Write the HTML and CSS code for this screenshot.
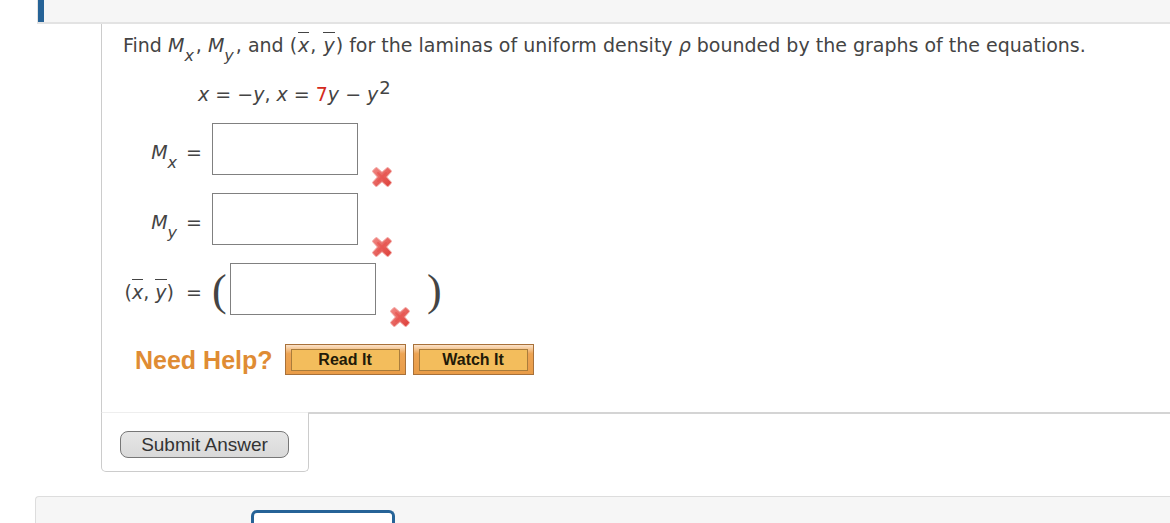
FILE: index.html
```html
<!DOCTYPE html>
<html lang="en">
    <head>
        <meta charset="UTF-8">
        <title>Question</title>
        <link rel="stylesheet" href="styles.css">
    </head>
    <body>
        <!-- Cross used next to every wrong answer -->
        <svg class="defs" width="0" height="0" aria-hidden="true">
            <defs>
                <linearGradient id="red" x1="0" y1="0" x2="1" y2="1">
                    <stop offset="0" stop-color="#f28b87"/>
                    <stop offset="1" stop-color="#dc3c36"/>
                </linearGradient>
                <symbol id="cross" viewBox="0 0 20 20">
                    <path d="M3.6 .8 L.9 3.5 Q.2 4.4 1 5.2 L5.4 10 L1 14.8 Q.2 15.6 .9 16.5 L3.6 19.2 Q4.5 19.8 5.3 19 L10 14.8 L14.7 19 Q15.5 19.8 16.4 19.2 L19.1 16.5 Q19.8 15.6 19 14.8 L14.6 10 L19 5.2 Q19.8 4.4 19.1 3.5 L16.4 .8 Q15.5 .2 14.7 1 L10 5.2 L5.3 1 Q4.5 .2 3.6 .8 Z" fill="url(#red)" stroke="#f3a5a2" stroke-width="1"/>
                    <path d="M6 6 L14 14 M14 6 L6 14" stroke="#e9504c" stroke-width="2" stroke-linecap="round" opacity=".6"/>
                </symbol>
            </defs>
        </svg>

        <header class="question-header">
            <div class="marker"></div>
        </header>

        <main class="question">
            <div class="question-body">
                <p class="prompt">Find <i>M</i><sub>x</sub>, <i>M</i><sub>y</sub>, and (<i class="bar">x</i>, <i class="bar">y</i>) for the laminas of uniform density <i>ρ</i> bounded by the graphs of the equations.</p>
                <p class="equation"><i>x</i> = −<i>y</i>, <i>x</i> = <span class="random">7</span><i>y</i> − <i>y</i><sup>2</sup></p>

                <form class="answers" id="answers" action="#">
                    <label for="mx"><i>M</i><sub>x</sub> =</label>
                    <div class="answer">
                        <input class="answer-box" type="text" id="mx" name="mx">
                        <svg class="cross" role="img" aria-label="Incorrect"><use href="#cross"/></svg>
                    </div>
                    <label for="my"><i>M</i><sub>y</sub> =</label>
                    <div class="answer">
                        <input class="answer-box" type="text" id="my" name="my">
                        <svg class="cross" role="img" aria-label="Incorrect"><use href="#cross"/></svg>
                    </div>
                    <label for="centroid">(<i class="bar">x</i>, <i class="bar">y</i>)&nbsp; =</label>
                    <div class="answer">
                        <span class="paren">(</span>
                        <input class="answer-box" type="text" id="centroid" name="centroid">
                        <svg class="cross" role="img" aria-label="Incorrect"><use href="#cross"/></svg>
                        <span class="paren close">)</span>
                    </div>
                </form>

                <div class="help">
                    <span class="help-title">Need Help?</span>
                    <button class="help-button" type="button"><span>Read It</span></button>
                    <button class="help-button" type="button"><span>Watch It</span></button>
                </div>
            </div>

            <div class="question-footer">
                <div class="submit-box">
                    <button class="submit" type="submit" form="answers">Submit Answer</button>
                </div>
                <div class="footer-line"></div>
            </div>
        </main>

        <section class="next-question">
            <div class="next-button"></div>
        </section>
    </body>
</html>
```

FILE: styles.css
```css
* {
    box-sizing: border-box;
}

body {
    margin: 0;
    background-color: white;
    color: #444;
    font-family: Verdana, "DejaVu Sans", sans-serif;
    font-size: 19px;
}

.defs {
    display: block;
}

.question-header {
    margin-left: 37px;
    background-color: #f6f6f6;
    border-left: 1px solid #e3e3e3;
    border-bottom: 2px solid #e3e3e3;
}

.marker {
    width: 6px;
    height: 22px;
    background-color: #266397;
}

.question {
    margin-left: 101px;
}

.question-body {
    padding: 7px 0 37px 21px;
    border-left: 1px solid #ccc;
}

p {
    margin: 0;
}

sub,
sup {
    font-size: 16px;
    line-height: 0;
}

sub {
    margin-right: 2px;
    font-style: italic;
    vertical-align: -9px;
}

sup {
    margin-left: 1px;
    font-size: 18px;
    vertical-align: 7px;
}

.prompt {
    line-height: 28px;
    white-space: nowrap;
}

.bar {
    display: inline-block;
    margin: 0 1px;
    border-top: 1px solid #444;
    line-height: 25px;
}

.equation {
    margin: 20px 0 14px 75px;
    line-height: 30px;
}

.random {
    color: #d42a20;
}

.answers {
    display: grid;
    grid-template-columns: 79px 1fr;
    column-gap: 10px;
    row-gap: 6px;
}

.answers label {
    line-height: 58px;
    text-align: right;
    white-space: nowrap;
}

.answers .bar {
    margin: 0;
    line-height: 25px;
}

.answers sub {
    margin-right: 3px;
    vertical-align: -9px;
}

.answer {
    display: flex;
    height: 64px;
}

.answer-box {
    width: 146px;
    height: 52px;
    padding: 4px 8px;
    border: 1px solid #808080;
    background-color: white;
    font: inherit;
}

.cross {
    width: 20px;
    height: 20px;
    margin-left: 14px;
    align-self: flex-end;
}

.paren {
    width: 18px;
    font-family: "Liberation Serif", serif;
    font-size: 44px;
    line-height: 56px;
}

.close {
    margin-left: 17px;
}

.help {
    display: flex;
    align-items: center;
    gap: 7px;
    margin: 17px 0 0 12px;
    font-family: Arial, "Liberation Sans", sans-serif;
    font-weight: bold;
}

.help-title {
    margin-right: 5px;
    color: #df8c34;
    font-size: 25px;
    line-height: 28px;
}

.help-button {
    width: 121px;
    height: 31px;
    padding: 4px 5px;
    border: 1px solid #a8713a;
    background: linear-gradient(#fbe3cb, #eda453 30%, #e99c48);
    color: #221a08;
    font: inherit;
    font-size: 16px;
}

.help-button span {
    display: block;
    border: 1px solid #a97c3b;
    background-color: #f3bd5c;
    line-height: 20px;
}

.question-footer {
    display: flex;
}

.submit-box {
    padding: 18px 19px 13px 18px;
    border: 1px solid #ccc;
    border-top-color: #eee;
    border-radius: 0 0 5px 5px;
}

.submit {
    display: block;
    width: 169px;
    height: 27px;
    padding: 0;
    border: 1px solid #777;
    border-radius: 8px;
    background: linear-gradient(#e6e6e6, #d9d9d9);
    color: #333;
    font-family: Arial, "Liberation Sans", sans-serif;
    font-size: 19px;
}

.footer-line {
    flex: 1;
    border-top: 2px solid #d4d4d4;
}

.next-question {
    margin: 24px 0 0 35px;
    padding: 13px 0 0 215px;
    border: 1px solid #ddd;
    border-right: none;
    border-bottom: none;
    border-radius: 4px 0 0 0;
    background-color: #f6f6f6;
}

.next-button {
    width: 144px;
    height: 13px;
    border: 3px solid #266397;
    border-bottom: none;
    border-radius: 6px 6px 0 0;
    background-color: white;
}
```
